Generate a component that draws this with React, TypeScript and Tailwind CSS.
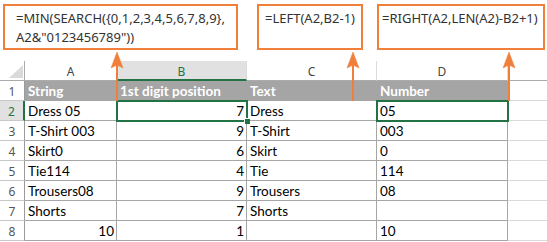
import React from "react";

const ORANGE = "#f07f3c";

const rows: string[][] = [
  ["Dress 05", "7", "Dress", "05"],
  ["T-Shirt 003", "9", "T-Shirt", "003"],
  ["Skirt0", "6", "Skirt", "0"],
  ["Tie114", "4", "Tie", "114"],
  ["Trousers08", "9", "Trousers", "08"],
  ["Shorts", "7", "Shorts", ""],
  ["10", "1", "", "10"],
];

const headers = ["String", "1st digit position", "Text", "Number"];

function Arrow({ x }: { x: number }) {
  return (
    <g fill={ORANGE} stroke={ORANGE}>
      <line x1={x} y1={62} x2={x} y2={101} strokeWidth={2} />
      <polygon points={`${x},52 ${x - 6},68 ${x},65 ${x + 6},68`} strokeWidth={0.5} />
    </g>
  );
}

export default function App() {
  return (
    <div className="relative w-[547px] h-[242px] bg-white overflow-hidden font-['Lato',sans-serif] text-black">
      {/* Formula callouts */}
      <div className="flex items-start h-[61px] pt-[4px] pl-[3px] font-['Noto_Sans',sans-serif] text-[13px] leading-[19px] text-[#333]">
        <div className="w-[235px] h-[46px] border-2 border-[#f07f3c] bg-white pl-[11px] pt-[3px] whitespace-nowrap">
          <span className="block">{"=MIN(SEARCH({0,1,2,3,4,5,6,7,8,9},"}</span>
          <span className="block">{'A2&"0123456789"))'}</span>
        </div>
        <div className="ml-[19px] w-[106px] h-[46px] border-2 border-[#f07f3c] bg-white pl-[6px] pt-[3px] whitespace-nowrap">
          =LEFT(A2,B2-1)
        </div>
        <div className="ml-[14px] w-[168px] h-[46px] border-2 border-[#f07f3c] bg-white pl-[3px] pt-[3px] whitespace-nowrap">
          =RIGHT(A2,LEN(A2)-B2+1)
        </div>
      </div>

      {/* Sheet */}
      <div className="grid grid-cols-[25px_92px_130px_130px_131px_1fr] auto-rows-[20px]">
        {/* column headers */}
        <div className="relative border-r border-b border-[#ababab] bg-white">
          <svg className="absolute right-[1px] bottom-[2px]" width="14" height="13" viewBox="0 0 14 13">
            <polygon points="0,13 14,13 14,0" fill="#dadada" />
          </svg>
        </div>
        <div className="border-r border-b border-r-[#dadada] border-b-[#ababab] text-center font-['Noto_Sans',sans-serif] text-[12px] text-[#444] pt-[2px] leading-[17px]">A</div>
        <div className="border-r border-b-2 border-r-[#dadada] border-b-[#217346] bg-[#e1e1e1] text-center font-['Noto_Sans',sans-serif] text-[12px] text-[#217346] pt-[2px] leading-[17px]">B</div>
        <div className="border-r border-b border-r-[#dadada] border-b-[#ababab] text-center font-['Noto_Sans',sans-serif] text-[12px] text-[#444] pt-[2px] leading-[17px]">C</div>
        <div className="border-r border-b border-r-[#dadada] border-b-[#ababab] text-center font-['Noto_Sans',sans-serif] text-[12px] text-[#444] pt-[2px] leading-[17px]">D</div>
        <div className="border-b border-[#ababab]"></div>

        {/* row 1 */}
        <div className="border-r border-b border-r-[#9b9b9b] border-b-[#c8c8c8] text-center font-['Noto_Sans',sans-serif] text-[12px] text-[#555] pt-[2px] leading-[17px]">1</div>
        {headers.map((h) => (
          <div key={h} className="bg-[#a5a5a5] border-r border-b border-[#a5a5a5] px-[3px] pt-[2px] leading-[17px] text-[13.5px] font-bold text-white whitespace-nowrap">
            {h}
          </div>
        ))}
        <div className="border-b border-[#dadada]"></div>

        {/* data rows */}
        {rows.map((r, i) => {
          const n = i + 2;
          const sel = n === 2;
          return (
            <React.Fragment key={n}>
              <div
                className={
                  sel
                    ? "bg-[#e1e1e1] border-r-2 border-b border-r-[#217346] border-b-[#c8c8c8] text-center font-['Noto_Sans',sans-serif] text-[12px] text-[#217346] pt-[2px] leading-[17px]"
                    : "border-r border-b border-r-[#9b9b9b] border-b-[#c8c8c8] text-center font-['Noto_Sans',sans-serif] text-[12px] text-[#555] pt-[2px] leading-[17px]"
                }
              >
                {n}
              </div>
              <div className={"border-r border-b border-[#a6a6a6] px-[2px] pl-[3px] pt-[2px] leading-[17px] text-[13.5px] whitespace-nowrap " + (n === 8 ? "text-right" : "text-left")}>
                {r[0]}
              </div>
              <div
                className={
                  sel
                    ? "relative z-10 border-r border-b border-[#a6a6a6] outline-2 outline-[#217346] -outline-offset-1 px-[2px] pt-[2px] leading-[17px] text-[13.5px] text-right"
                    : "border-r border-b border-[#a6a6a6] px-[2px] pt-[2px] leading-[17px] text-[13.5px] text-right"
                }
              >
                {r[1]}
                {sel && (
                  <span className="absolute -right-[4px] -bottom-[4px] w-[6px] h-[6px] bg-[#217346] border-l border-t border-white"></span>
                )}
              </div>
              <div className="border-r border-b border-[#a6a6a6] px-[3px] pt-[2px] leading-[17px] text-[13.5px] whitespace-nowrap">{r[2]}</div>
              <div
                className={
                  sel
                    ? "relative z-10 border-r border-b border-[#a6a6a6] outline-2 outline-[#217346] -outline-offset-1 px-[3px] pt-[2px] leading-[17px] text-[13.5px]"
                    : "border-r border-b border-[#a6a6a6] px-[3px] pt-[2px] leading-[17px] text-[13.5px]"
                }
              >
                {r[3]}
              </div>
              <div className="border-b border-[#dadada]"></div>
            </React.Fragment>
          );
        })}
      </div>

      {/* Callout arrows */}
      <svg className="absolute inset-0 z-20 pointer-events-none" width="547" height="242">
        <Arrow x={117} />
        <Arrow x={353} />
        <Arrow x={509} />
      </svg>
    </div>
  );
}
